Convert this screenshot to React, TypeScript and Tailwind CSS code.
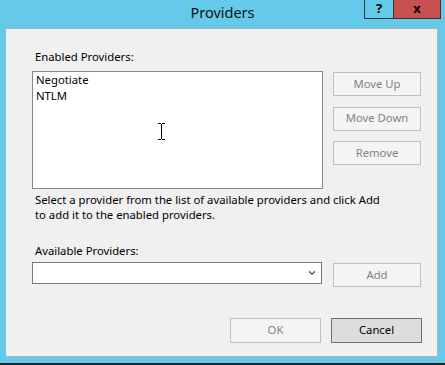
import { ChevronDown } from 'lucide-react';

const font = { fontFamily: '"Noto Sans", "Open Sans", sans-serif' };

const DlgButton = ({
  label,
  disabled,
  className,
}: {
  label: string;
  disabled?: boolean;
  className?: string;
}) => (
  <div
    className={
      'flex items-center justify-center border text-[11.3px] ' +
      (disabled
        ? 'border-[#bfbfbf] bg-[#f4f4f4] text-[#838383] '
        : 'border-[#707070] bg-[#dddddd] text-black ') +
      (className ?? '')
    }
  >
    {label}
  </div>
);

const App = () => {
  return (
    <div
      className="w-[445px] h-[365px] bg-[#65caea] flex flex-col overflow-hidden"
      style={font}
    >
      {/* Title bar */}
      <div className="relative h-[28px] shrink-0 flex items-center justify-center">
        <span className="text-[14.5px] text-[#111] leading-none pb-[3px]">Providers</span>
        <div className="absolute top-[-1px] right-[4px] flex">
          <div className="w-[29px] h-[20px] border border-[#2b3a40] border-r-0 flex items-center justify-center text-[13px] font-bold text-black">
            ?
          </div>
          <div className="w-[48px] h-[20px] border border-[#4a2a2a] bg-[#c75050] flex items-center justify-center text-[13px] font-bold text-black">
            x
          </div>
        </div>
      </div>

      {/* Client area */}
      <div className="ml-[6px] w-[432px] h-[329px] shrink-0 bg-[#f0f0f0] border-t border-r border-b border-[#a9b6bc] flex flex-col text-black text-[11.3px]">
        <div className="pl-[26px] pt-[20px]">
          <div className="pl-[3px] h-[16px] leading-[16px] mb-[6px]">Enabled Providers:</div>

          <div className="flex gap-[10px]">
            <div className="relative w-[291px] h-[118px] bg-white border border-[#828790] pl-[3px] leading-[16px]">
              <div>Negotiate</div>
              <div>NTLM</div>
              <svg
                className="absolute left-[124px] top-[51px]"
                width="9"
                height="17"
                viewBox="0 0 9 17"
              >
                <path d="M1 0.5h3M5 0.5h3M4.5 1v15M1 16.5h3M5 16.5h3" stroke="#000" strokeWidth="1" fill="none" />
              </svg>
            </div>
            <div className="flex flex-col gap-[10.5px] pt-[1px]">
              <DlgButton label="Move Up" disabled className="w-[88px] h-[24px]" />
              <DlgButton label="Move Down" disabled className="w-[88px] h-[24px]" />
              <DlgButton label="Remove" disabled className="w-[88px] h-[24px]" />
            </div>
          </div>

          <div className="pl-[3px] mt-[3px] leading-[15px]">
            Select a provider from the list of available providers and click Add
            <br />
            to add it to the enabled providers.
          </div>

          <div className="pl-[3px] mt-[21px] h-[16px] leading-[16px] mb-[3px]">Available Providers:</div>

          <div className="flex gap-[11px]">
            <div className="w-[290px] h-[22px] bg-white border border-[#7a7a7a] flex items-center justify-end pr-[4px]">
              <ChevronDown className="w-[10px] h-[10px] text-[#606060]" strokeWidth={3.5} />
            </div>
            <DlgButton label="Add" disabled className="w-[88px] h-[24px] mt-[1px]" />
          </div>
        </div>

        <div className="mt-[31px] pr-[15px] flex justify-end gap-[10px]">
          <DlgButton label="OK" disabled className="w-[91px] h-[25px]" />
          <DlgButton label="Cancel" className="w-[91px] h-[25px]" />
        </div>
      </div>

      <div className="flex-1" />
      <div className="h-[2px] bg-[#252525] shrink-0" />
    </div>
  );
};

export default App;
